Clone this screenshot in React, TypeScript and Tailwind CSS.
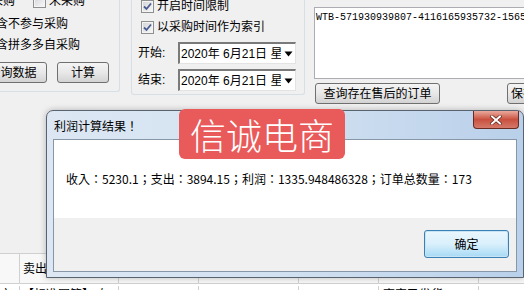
import React from "react";

const ui = { fontFamily: '"Liberation Sans", "Noto Sans CJK SC", sans-serif' };
const cjk = { fontFamily: '"Noto Sans CJK SC", "Liberation Sans", sans-serif' };
// centred full-width punctuation, like the dialog font in the picture
const msg = { fontFamily: '"Noto Sans CJK TC", "Noto Sans CJK SC", sans-serif' };

function Check({ checked }: { checked?: boolean }) {
  return (
    <span className="inline-flex h-[13px] w-[13px] shrink-0 items-center justify-center border border-[#8e8f8f] bg-white">
      <span className="flex h-[11px] w-[11px] items-center justify-center border border-[#f4f4f4] bg-linear-to-br from-[#d4d6d9] to-[#f6f6f6]">
        {checked && (
          <svg width="9" height="9" viewBox="0 0 9 9">
            <path d="M1 4.5 L3.5 7 L8 1.5" fill="none" stroke="#4a5c91" strokeWidth="1.8" />
          </svg>
        )}
      </span>
    </span>
  );
}

function WinButton({ children, className }: { children: React.ReactNode; className: string }) {
  return (
    <div
      className={`flex h-[21px] shrink-0 items-center justify-center rounded-[3px] border border-[#707070] bg-linear-to-b from-[#f4f4f4] via-[#e8e8e8] to-[#d3d3d3] text-[12px] text-black ${className}`}
    >
      {children}
    </div>
  );
}

function DatePicker() {
  return (
    <div className="flex h-[22px] w-[118px] items-center overflow-hidden border-t-2 border-l-2 border-r border-b border-t-[#7a7a7a] border-l-[#7a7a7a] border-r-[#e3e3e3] border-b-[#e3e3e3] bg-white pl-[1px] text-[12px] text-black">
      <span className="w-[100px] shrink-0 overflow-hidden whitespace-nowrap">2020年 6月21日 星期日</span>
      <svg width="9" height="6" viewBox="0 0 9 6" className="ml-[3px] shrink-0">
        <path d="M0.5 0.5 H8.5 L4.5 5.5 Z" fill="#000" />
      </svg>
    </div>
  );
}

export default function App() {
  return (
    <div className="relative h-[290px] w-[524px] overflow-hidden bg-[#f0f0f0]" style={ui}>
      {/* window underneath */}
      <div className="flex h-[253px] items-start">
        {/* filter group */}
        <div className="-ml-[50px] -mt-[10px] h-[102px] w-[170px] shrink-0 rounded-br-[3px] border-r border-b border-[#d5dfe5] pt-[4px] text-[12px] text-black">
          <div className="flex h-[14px] items-center pl-[13px]">
            <Check checked />
            <span className="ml-[3px] w-[54px]">已采购</span>
            <Check />
            <span className="ml-[3px]">未采购</span>
          </div>
          <div className="mt-[9px] flex h-[14px] items-center pl-[30px]">
            <Check />
            <span className="ml-[3px]">含不参与采购</span>
          </div>
          <div className="mt-[7px] flex h-[14px] items-center pl-[30px]">
            <Check />
            <span className="ml-[3px]">含拼多多自采购</span>
          </div>
          <div className="mt-[10px] flex pl-[28px]">
            <WinButton className="w-[69px]">查询数据</WinButton>
            <WinButton className="ml-[10px] w-[52px]">计算</WinButton>
          </div>
        </div>

        {/* time group */}
        <div className="-mt-[10px] ml-[11px] h-[105px] w-[174px] shrink-0 rounded-b-[3px] border-x border-b border-[#d5dfe5] pt-[9px] pl-[6px] text-[12px] text-black">
          <div className="flex h-[14px] items-center pl-[3px]">
            <Check checked />
            <span className="ml-[3px]">开启时间限制</span>
          </div>
          <div className="mt-[7px] flex h-[14px] items-center pl-[3px]">
            <Check checked />
            <span className="ml-[3px]">以采购时间作为索引</span>
          </div>
          <div className="mt-[8px] flex items-center">
            <span className="w-[40px]">开始:</span>
            <DatePicker />
          </div>
          <div className="mt-[5px] flex items-center">
            <span className="w-[40px]">结束:</span>
            <DatePicker />
          </div>
        </div>

        {/* order ids */}
        <div className="ml-[9px] w-[250px] shrink-0 pt-[7px]">
          <div className="h-[72px] w-[230px] border border-[#abadb3] bg-white pt-[3px] pl-[1px]">
            <div className="whitespace-nowrap text-[10px] leading-[14px] text-black" style={{ fontFamily: '"Liberation Mono", monospace' }}>
              WTB-571930939807-4116165935732-1565043
            </div>
          </div>
          <div className="mt-[4px] flex">
            <WinButton className="ml-[1px] w-[125px]">查询存在售后的订单</WinButton>
            <WinButton className="ml-[67px] w-[50px] justify-start pl-[3px]">保存</WinButton>
          </div>
        </div>
      </div>

      {/* grid */}
      <div className="text-[12px] text-black">
        <div className="flex h-[31px] border-t border-b border-[#d0d0d0] bg-[#f8f8f8]">
          <div className="w-[20px] shrink-0 border-r border-[#d0d0d0]" />
          <div className="flex w-[99px] shrink-0 items-center border-r border-[#d0d0d0] pl-[3px]">卖出</div>
          <div className="w-[80px] shrink-0 border-r border-[#d0d0d0]" />
          <div className="w-[100px] shrink-0 border-r border-[#d0d0d0]" />
          <div className="w-[80px] shrink-0 border-r border-[#d0d0d0]" />
          <div className="w-[100px] shrink-0 border-r border-[#d0d0d0]" />
          <div className="flex-1" />
        </div>
        <div className="flex h-[24px] bg-white pt-[2px]">
          <div className="w-[20px] shrink-0 border-r border-[#d0d0d0] text-right">六：</div>
          <div className="w-[99px] shrink-0 overflow-hidden whitespace-nowrap border-r border-[#d0d0d0] pl-[2px]">【标准图管】 左：</div>
          <div className="w-[80px] shrink-0 border-r border-[#d0d0d0] pl-[4px]">1.00000</div>
          <div className="w-[100px] shrink-0 border-r border-[#d0d0d0]" />
          <div className="w-[80px] shrink-0 border-r border-[#d0d0d0] pl-[3px]">166.00000</div>
          <div className="w-[100px] shrink-0 border-r border-[#d0d0d0] pl-[4px]">商家已发货</div>
          <div className="flex-1 pl-[4px]">1270663</div>
        </div>
      </div>

      {/* message box */}
      <div className="absolute top-[110px] left-[46px] flex h-[168px] w-[478px] flex-col rounded-t-[7px] border border-[#59636f] bg-linear-to-r from-[#dce7f3] via-[#d2e1f1] to-[#b9d0ea] px-[6px] pb-[5px] shadow-[0_0_6px_rgba(0,0,0,0.25)]">
        <div className="relative flex h-[28px] shrink-0 items-center pl-[1px] pt-[2px] text-[12px] text-black" style={msg}>
          利润计算结果！
          <div className="absolute top-0 right-[-2px] flex h-[18px] w-[46px] items-center justify-center rounded-b-[4px] border border-t-0 border-[#6b2a22] bg-linear-to-b from-[#e9a99e] via-[#c9503f] to-[#d5796a]">
            <svg width="12" height="10" viewBox="0 0 12 10">
              <path d="M2 1.5 L10 8.5 M10 1.5 L2 8.5" stroke="#5a1a12" strokeWidth="3.2" strokeLinecap="square" />
              <path d="M2 1.5 L10 8.5 M10 1.5 L2 8.5" stroke="#ffffff" strokeWidth="2" strokeLinecap="square" />
            </svg>
          </div>
        </div>
        <div className="flex flex-1 flex-col border border-[#8897a8]">
          <div className="h-[78px] bg-white pt-[32px] pl-[12px] text-[12px] leading-[14px] text-black" style={msg}>
            收入：5230.1；支出：3894.15；利润：1335.948486328；订单总数量：173
          </div>
          <div className="flex flex-1 justify-end bg-[#f0f0f0] pt-[12px] pr-[7px]">
            <div className="flex h-[28px] w-[85px] items-center justify-center rounded-[3px] border border-[#3c7fb1] bg-linear-to-b from-[#eaf6fd] via-[#d9f0fc] to-[#a7d9f5] text-[12px] text-black shadow-[inset_0_0_0_1px_#c5e4f7]" style={cjk}>
              确定
            </div>
          </div>
        </div>
      </div>

      {/* watermark */}
      <div
        className="absolute top-[109px] left-[179px] flex h-[50px] w-[166px] items-center justify-center rounded-[6px] bg-[#e95a5b] text-[36px] font-light leading-none text-white"
        style={cjk}
      >
        信诚电商
      </div>
    </div>
  );
}
